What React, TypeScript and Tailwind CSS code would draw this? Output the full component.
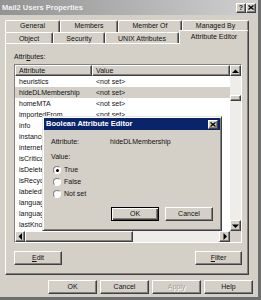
import React from "react";

const raised =
  "border border-t-white border-l-white border-r-[#404040] border-b-[#404040] bg-[#d4d0c8] shadow-[inset_-1px_-1px_#808080]";
const sunken =
  "border border-t-[#808080] border-l-[#808080] border-r-white border-b-white shadow-[inset_1px_1px_#404040]";

const rows = [
  "heuristics",
  "hideDLMembership",
  "homeMTA",
  "importedFrom",
  "info",
  "instanceType",
  "internetEncoding",
  "isCriticalSystemObject",
  "isDeleted",
  "isRecycled",
  "labeledURI",
  "language",
  "languageCode",
  "lastKnownParent",
  "legacyExchangeDN",
];

function Arrow({ dir }: { dir: "up" | "down" | "left" | "right" }) {
  const pts = {
    up: "0,4 3.5,0.5 7,4",
    down: "0,0.5 3.5,4 7,0.5",
    left: "4,0 0.5,3.5 4,7",
    right: "0.5,0 4,3.5 0.5,7",
  }[dir];
  const vert = dir === "up" || dir === "down";
  return (
    <svg width={vert ? 7 : 4} height={vert ? 4 : 7} viewBox={vert ? "0 0 7 4" : "0 0 4 7"}>
      <polygon points={pts} fill="#000" />
    </svg>
  );
}

function CloseGlyph() {
  return (
    <svg width="6" height="5" viewBox="0 0 6 5">
      <path d="M0.5 0.5 L5.5 4.5 M5.5 0.5 L0.5 4.5" stroke="#000" strokeWidth="1.3" />
    </svg>
  );
}

function Btn({ children, className = "" }: { children: React.ReactNode; className?: string }) {
  return <div className={`flex items-center justify-center ${raised} ${className}`}>{children}</div>;
}

function Radio({ label, checked }: { label: string; checked?: boolean }) {
  return (
    <div className="flex h-[12px] items-center">
      <div className="ml-[2px] flex h-[8px] w-[8px] items-center justify-center rounded-full border border-t-[#808080] border-l-[#808080] border-r-white border-b-white bg-white">
        {checked && <div className="h-[3px] w-[3px] rounded-full bg-black" />}
      </div>
      <span className="ml-[3px]">{label}</span>
    </div>
  );
}

export default function App() {
  return (
    <div className="relative flex h-[300px] w-[261px] flex-col overflow-hidden border-r-[3px] border-b-[3px] border-r-[#6e6e6e] border-b-[#6e6e6e] bg-[#d4d0c8] font-['Liberation_Sans',Arial,sans-serif] text-[7px] leading-[8px] text-[#111]">
      {/* Title bar */}
      <div className="flex h-[15px] items-center justify-between bg-linear-to-r from-[#939393] to-[#d0d0d0] pl-[2px] pr-[2px]">
        <span className="text-[7.5px] font-bold text-[#f2f2f2]">Mail2 Users Properties</span>
        <div className="flex">
          <Btn className="h-[10px] w-[10px] text-[7px] font-bold leading-none">?</Btn>
          <Btn className="h-[10px] w-[10px]">
            <CloseGlyph />
          </Btn>
        </div>
      </div>

      {/* Tabs */}
      <div className="ml-[5px] mt-[5px] flex h-[12px] w-[244px]">
        {[
          ["General", "w-[55px]"],
          ["Members", "w-[58px]"],
          ["Member Of", "w-[64px]"],
          ["Managed By", "w-[67px]"],
        ].map(([t, w]) => (
          <div
            key={t}
            className={`${w} flex items-start justify-center rounded-t-[2px] border-t border-l border-r border-t-white border-l-white border-r-[#404040] pt-[1px] shadow-[inset_-1px_0_#808080]`}
          >
            {t}
          </div>
        ))}
      </div>
      <div className="ml-[5px] flex h-[11px] w-[244px] items-start">
        {[
          ["Object", "w-[48px]"],
          ["Security", "w-[52px]"],
          ["UNIX Attributes", "w-[74px]"],
        ].map(([t, w]) => (
          <div
            key={t}
            className={`${w} flex h-[11px] items-center justify-center rounded-t-[2px] border-t border-l border-r border-t-white border-l-white border-r-[#404040] pt-[1px] shadow-[inset_-1px_0_#808080]`}
          >
            {t}
          </div>
        ))}
        <div className="relative z-10 -mt-[2px] flex h-[14px] w-[70px] items-start justify-center rounded-t-[2px] border-t border-l border-r border-t-white border-l-white border-r-[#404040] bg-[#d4d0c8] pt-[2px] shadow-[inset_-1px_0_#808080]">
          Attribute Editor
        </div>
      </div>

      {/* Panel */}
      <div className="ml-[5px] flex h-[232px] w-[244px] flex-col border border-t-white border-l-white border-r-[#404040] border-b-[#404040] pl-[8px] pt-[9px] shadow-[inset_-1px_-1px_#808080]">
        <div>
          Attri<span className="underline">b</span>utes:
        </div>

        {/* List */}
        <div className={`mt-[3px] flex h-[179px] w-[228px] flex-col ${sunken}`}>
          <div className="flex h-[166px]">
            <div className="flex w-[215px] flex-col overflow-hidden bg-white">
              <div className="flex h-[11px] shrink-0">
                <div className={`flex w-[77px] items-center pl-[3px] ${raised}`}>Attribute</div>
                <div className={`flex flex-1 items-center pl-[3px] ${raised}`}>Value</div>
              </div>
              {rows.map((r, i) => (
                <div
                  key={r + i}
                  className={`flex h-[11px] shrink-0 items-center whitespace-nowrap ${i === 1 ? "bg-[#d4d0c8]" : ""}`}
                >
                  <div className="w-[77px] overflow-hidden pl-[4px]">{r}</div>
                  <div className="pl-[4px]">&lt;not set&gt;</div>
                </div>
              ))}
            </div>
            <div className="flex w-[11px] flex-col bg-[#eeede9]">
              <Btn className="h-[11px] w-[11px] shrink-0">
                <Arrow dir="up" />
              </Btn>
              <div className="flex-1">
                <div className={`mt-[19px] h-[6px] w-[11px] ${raised}`} />
              </div>
              <Btn className="h-[11px] w-[11px] shrink-0">
                <Arrow dir="down" />
              </Btn>
            </div>
          </div>
          <div className="flex h-[11px] bg-[#eeede9]">
            <Btn className="h-[11px] w-[10px]">
              <Arrow dir="left" />
            </Btn>
            <div className={`h-[11px] w-[108px] ${raised}`} />
            <div className="flex-1" />
            <Btn className="h-[11px] w-[11px]">
              <Arrow dir="right" />
            </Btn>
            <div className="h-[11px] w-[11px] bg-[#d4d0c8]" />
          </div>
        </div>

        <div className="mt-[8px] flex w-[228px] justify-between">
          <Btn className="h-[14px] w-[48px]">
            <span>
              <span className="underline">E</span>dit
            </span>
          </Btn>
          <Btn className="h-[14px] w-[47px]">
            <span>
              <span className="underline">F</span>ilter
            </span>
          </Btn>
        </div>
      </div>

      {/* Bottom buttons */}
      <div className="mt-[5px] flex justify-end gap-[3px] pr-[5px]">
        <Btn className="h-[14px] w-[49px]">OK</Btn>
        <Btn className="h-[14px] w-[49px]">Cancel</Btn>
        <Btn className="h-[14px] w-[49px] text-[#a09d96] [text-shadow:1px_1px_#fff]">Apply</Btn>
        <Btn className="h-[14px] w-[49px]">Help</Btn>
      </div>

      {/* Boolean Attribute Editor dialog */}
      <div className="absolute left-[42px] top-[116px] z-20 flex h-[115px] w-[180px] flex-col border border-t-[#e6e6e6] border-l-[#e6e6e6] border-r-[#404040] border-b-[#404040] bg-[#d4d0c8] shadow-[inset_1px_1px_white,inset_-1px_-1px_#808080]">
        <div className="mx-[1px] mt-[1px] flex h-[12px] items-center justify-between bg-[#0a246a] pl-[2px] pr-[2px]">
          <span className="text-[7.5px] font-bold text-white">Boolean Attribute Editor</span>
          <Btn className="h-[9px] w-[10px]">
            <CloseGlyph />
          </Btn>
        </div>
        <div className="flex flex-col pl-[8px] pr-[8px]">
          <div className="mt-[8px] flex">
            <span className="w-[59px]">Attribute:</span>
            <span>hideDLMembership</span>
          </div>
          <div className="mt-[7px]">Value:</div>
          <div className="mt-[3px] flex flex-col">
            <Radio label="True" checked />
            <Radio label="False" />
            <Radio label="Not set" />
          </div>
          <div className="mt-[7px] flex justify-end gap-[6px]">
            <div className="flex h-[14px] w-[48px] items-center justify-center border border-black bg-[#d4d0c8] shadow-[inset_1px_1px_white,inset_-1px_-1px_#404040,inset_-2px_-2px_#808080]">
              OK
            </div>
            <Btn className="h-[14px] w-[48px]">Cancel</Btn>
          </div>
        </div>
      </div>
    </div>
  );
}
